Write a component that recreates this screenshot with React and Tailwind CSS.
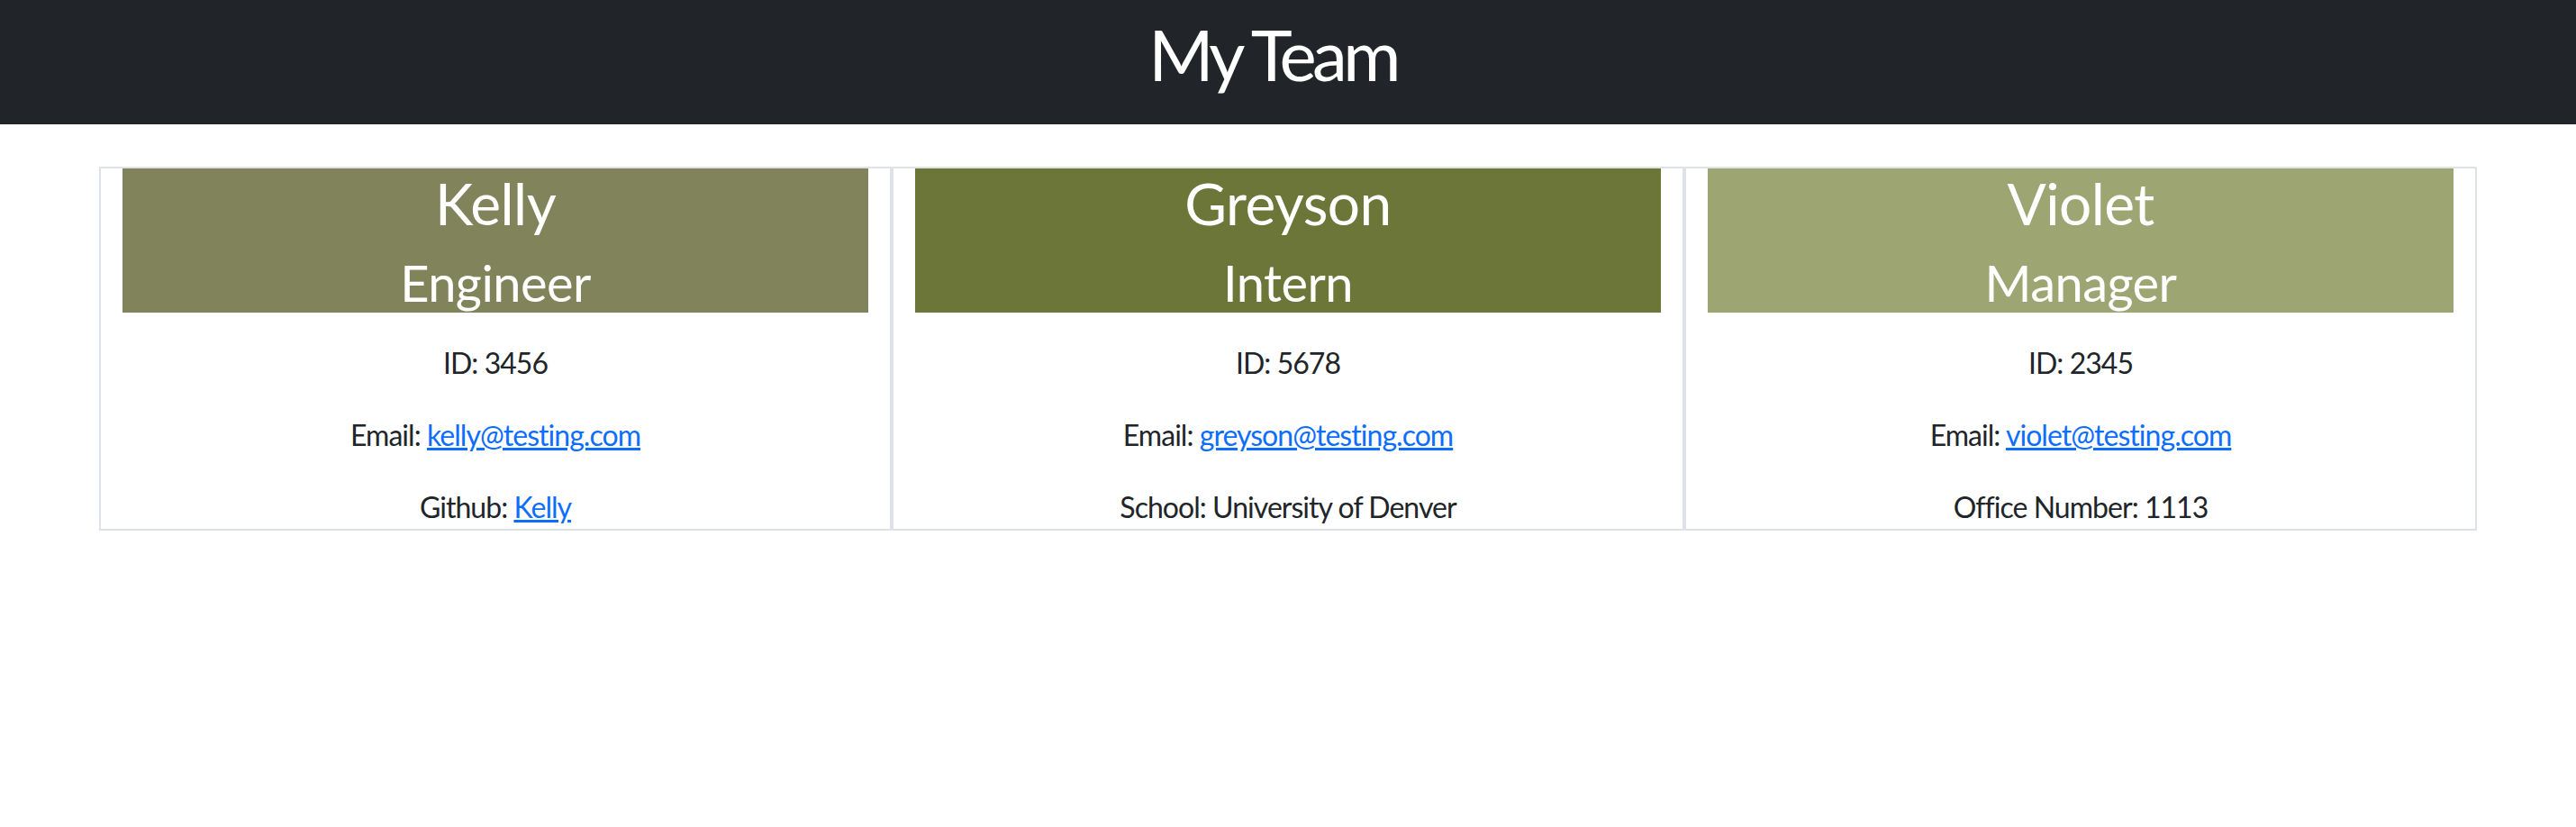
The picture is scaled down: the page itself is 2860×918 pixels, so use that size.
const team = [
  {
    name: "Kelly",
    role: "Engineer",
    id: 3456,
    email: "kelly@testing.com",
    color: "bg-[#81845b]",
    extra: { label: "Github", value: "Kelly", link: true },
  },
  {
    name: "Greyson",
    role: "Intern",
    id: 5678,
    email: "greyson@testing.com",
    color: "bg-[#6c7638]",
    extra: { label: "School", value: "University of Denver" },
  },
  {
    name: "Violet",
    role: "Manager",
    id: 2345,
    email: "violet@testing.com",
    color: "bg-[#9da572]",
    extra: { label: "Office Number", value: "1113" },
  },
];

const Card = ({ member }) => (
  <div className="border-2 border-[#dee2e6] px-6 text-center">
    <div className={`${member.color} text-white tracking-[-0.035em]`}>
      <h2 className="text-[64px] leading-[77px] mb-4 font-normal">{member.name}</h2>
      <h3 className="text-[56px] leading-[67px] font-normal">{member.role}</h3>
    </div>
    <div className="pt-8 text-[32px] leading-[48px] text-[#212529] tracking-[-0.03em]">
      <p className="mb-8">ID: {member.id}</p>
      <p className="mb-8">
        Email:{" "}
        <a href={`mailto:${member.email}`} className="text-[#0d6efd] underline">
          {member.email}
        </a>
      </p>
      <p>
        {member.extra.label}:{" "}
        {member.extra.link ? (
          <a href="#" className="text-[#0d6efd] underline">{member.extra.value}</a>
        ) : (
          member.extra.value
        )}
      </p>
    </div>
  </div>
);

const App = () => {
  return (
    <div className="min-h-screen bg-white" style={{ fontFamily: "Lato, 'Noto Sans', sans-serif" }}>
      <header className="bg-[#212529] text-white text-center pt-[12px] pb-[30px] pr-[34px]">
        <h1 className="text-[78px] leading-[96px] font-normal tracking-[-0.06em]">My Team</h1>
      </header>
      <main className="w-[2640px] mx-auto mt-[47px] grid grid-cols-3">
        {team.map((m) => (
          <Card key={m.name} member={m} />
        ))}
      </main>
    </div>
  );
};

export default App;
